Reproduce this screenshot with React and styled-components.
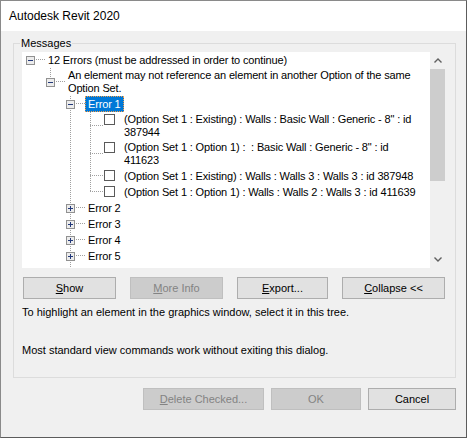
import React from 'react'
import styled, { createGlobalStyle, css } from 'styled-components'

const GlobalStyle = createGlobalStyle`
    html, body {
        margin: 0;
        padding: 0;
        background: #fff;
    }
    * {
        box-sizing: border-box;
    }
`

const uiFont = `'Liberation Sans', Arial, sans-serif`
const dot = '#a0a0a0'
const vLine = `repeating-linear-gradient(to bottom, ${dot} 0 1px, transparent 1px 2px)`
const hLine = `repeating-linear-gradient(to right, ${dot} 0 1px, transparent 1px 2px)`

const item1 = '(Option Set 1 : Existing) : Walls : Basic Wall : Generic - 8" : id\n387944'
const item2 = '(Option Set 1 : Option 1) :  : Basic Wall : Generic - 8" : id\n411623'
const item3 = '(Option Set 1 : Existing) : Walls : Walls 3 : Walls 3 : id 387948'
const item4 = '(Option Set 1 : Option 1) : Walls : Walls 2 : Walls 3 : id 411639'

// only the rows that fit in the visible part of the tree (Error 6 is half hidden)
const rows = [
    { text: '12 Errors (must be addressed in order to continue)', rails: [], open: true },
    {
        text: 'An element may not reference an element in another Option of the same\nOption Set.',
        rails: [false], open: true, up: true,
    },
    { text: 'Error 1', rails: [false, false], open: true, up: true, down: true, selected: true },
    { text: item1, rails: [false, false, true], leaf: true, up: true, down: true },
    { text: item2, rails: [false, false, true], leaf: true, up: true, down: true },
    { text: item3, rails: [false, false, true], leaf: true, up: true, down: true },
    { text: item4, rails: [false, false, true], leaf: true, up: true },
    ...Array.from({ length: 5 }, (_, i) => ({
        text: `Error ${i + 2}`, rails: [false, false], open: false, up: true, down: true,
    })),
]

const connectorBg = ({ $up, $down }) => {
    const layers = [[hLine, '8px calc(50% - 0.5px)', 'calc(100% - 8px) 1px']]
    if ($up) layers.push([vLine, '8px 0', '1px 50%'])
    if ($down) layers.push([vLine, '8px 100%', '1px 50%'])
    return css`
        background-image: ${layers.map(l => l[0]).join(', ')};
        background-position: ${layers.map(l => l[1]).join(', ')};
        background-size: ${layers.map(l => l[2]).join(', ')};
        background-repeat: no-repeat;
    `
}

const Window = styled.div`
    width: 467px;
    height: 438px;
    display: flex;
    flex-direction: column;
    border: 1px solid #6f6f6f;
    border-color: #8a8a8a #5c5c5c #5c5c5c #8a8a8a;
    font-family: ${uiFont};
    font-size: 11px;
    color: #000;
`

const TitleBar = styled.div`
    height: 30px;
    flex: none;
    display: flex;
    align-items: center;
    padding-left: 8px;
    background: #fff;
    font-size: 12px;
`

const Body = styled.div`
    flex: 1;
    display: flex;
    flex-direction: column;
    padding: 6px 10px 0 12px;
    background: #f0f0f0;
`

const GroupBox = styled.fieldset`
    margin: 0;
    padding: 2px 8px 20px 8px;
    border: 1px solid #dcdcdc;
    min-width: 0;

    legend {
        margin-left: -2px;
        padding: 0 1px;
        line-height: 13px;
        font-size: 11px;
    }
`

const TreeFrame = styled.div`
    height: 216px;
    display: flex;
`

const Tree = styled.div`
    flex: 1;
    min-width: 0;
    overflow: hidden;
    background: #fff;
    font-size: 11px;
    letter-spacing: -0.15px;
`

const Row = styled.div`
    display: flex;
    align-items: stretch;
`

const Gutter = styled.div`
    flex: none;
    width: 20px;
    ${p => p.$line && css`
        background: ${vLine} 8px 0 / 1px 100% no-repeat;
    `}
`

const Connector = styled.div`
    flex: none;
    width: ${p => p.$w}px;
    display: flex;
    align-items: center;
    ${connectorBg}
`

const ExpanderBox = styled.svg`
    flex: none;
    margin-left: 4px;
    display: block;
`

const Check = styled.span`
    flex: none;
    align-self: flex-start;
    width: 11px;
    height: 11px;
    margin: 2px 6px 0 0;
    border: 1px solid #5a5a5a;
    background: #fff;
`

const Label = styled.span`
    display: block;
    padding: 0 2px;
    border: 1px solid transparent;
    line-height: ${p => (p.$multi ? 13 : 14)}px;
    white-space: pre;

    ${p => p.$selected && css`
        background: #0078d7;
        color: #fff;
        border: 1px dotted #f5a04a;
    `}
`

const ScrollBar = styled.div`
    flex: none;
    width: 17px;
    display: flex;
    flex-direction: column;
    background: #f0f0f0;
`

const ArrowCell = styled.div`
    height: 17px;
    flex: none;
    display: flex;
    align-items: center;
    justify-content: center;
    padding-right: 1px;
`

const Thumb = styled.div`
    height: 112px;
    flex: none;
    margin-right: 2px;
    background: #cdcdcd;
`

const Track = styled.div`
    flex: 1;
`

const ButtonRow = styled.div`
    display: flex;
    justify-content: space-between;
    margin: 9px 2px 0 1px;
`

const Button = styled.button`
    width: ${p => p.$w}px;
    height: 22px;
    flex: none;
    padding: 0;
    font-family: ${uiFont};
    font-size: 11px;
    color: #000;
    background: #e1e1e1;
    border: 1px solid #adadad;

    &:disabled {
        color: #838383;
        background: #cccccc;
        border-color: #bfbfbf;
    }
`

const Hint = styled.p`
    margin: ${p => p.$top}px 0 0;
    line-height: 13px;
    font-size: 11px;
`

const BottomBar = styled.div`
    display: flex;
    justify-content: flex-end;
    gap: 7px;
    margin-top: 10px;
`

const Expander = ({ open }) => (
    <ExpanderBox width="9" height="9" viewBox="0 0 9 9">
        <rect x="0.5" y="0.5" width="8" height="8" fill="#ececec" stroke="#919191" />
        <path d="M2 4.5H7" stroke="#23397a" />
        {!open && <path d="M4.5 2V7" stroke="#23397a" />}
    </ExpanderBox>
)

const Chevron = ({ down }) => (
    <svg width="8" height="5" viewBox="0 0 8 5">
        <path
            d={down ? 'M0.5 0.5L4 4L7.5 0.5' : 'M0.5 4.5L4 1L7.5 4.5'}
            fill="none"
            stroke="#606060"
            strokeWidth="1.4"
        />
    </svg>
)

const Mnemonic = ({ children }) => (
    <>
        <u>{children[0]}</u>
        {children.slice(1)}
    </>
)

const TreeRow = ({ row }) => (
    <Row>
        {row.rails.map((line, i) => <Gutter key={i} $line={line} />)}
        <Connector $w={row.leaf ? 22 : 23} $up={row.up} $down={row.down}>
            {!row.leaf && <Expander open={row.open} />}
        </Connector>
        {row.leaf && <Check />}
        <Label $multi={row.text.includes('\n')} $selected={row.selected}>
            {row.text}
        </Label>
    </Row>
)

const App = () => {
    return (
        <>
            <GlobalStyle />
            <Window>
                <TitleBar>Autodesk Revit 2020</TitleBar>
                <Body>
                    <GroupBox>
                        <legend>Messages</legend>
                        <TreeFrame>
                            <Tree>
                                {rows.map((row, i) => <TreeRow key={i} row={row} />)}
                            </Tree>
                            <ScrollBar>
                                <ArrowCell><Chevron /></ArrowCell>
                                <Thumb />
                                <Track />
                                <ArrowCell><Chevron down /></ArrowCell>
                            </ScrollBar>
                        </TreeFrame>

                        <ButtonRow>
                            <Button $w={93}><Mnemonic>Show</Mnemonic></Button>
                            <Button $w={93} disabled><Mnemonic>More Info</Mnemonic></Button>
                            <Button $w={91}><Mnemonic>Export...</Mnemonic></Button>
                            <Button $w={103}><Mnemonic>Collapse &lt;&lt;</Mnemonic></Button>
                        </ButtonRow>

                        <Hint $top={7}>To highlight an element in the graphics window, select it in this tree.</Hint>
                        <Hint $top={25}>Most standard view commands work without exiting this dialog.</Hint>
                    </GroupBox>

                    <BottomBar>
                        <Button $w={121} disabled><Mnemonic>Delete Checked...</Mnemonic></Button>
                        <Button $w={90} disabled>OK</Button>
                        <Button $w={88}>Cancel</Button>
                    </BottomBar>
                </Body>
            </Window>
        </>
    )
}

export default App
